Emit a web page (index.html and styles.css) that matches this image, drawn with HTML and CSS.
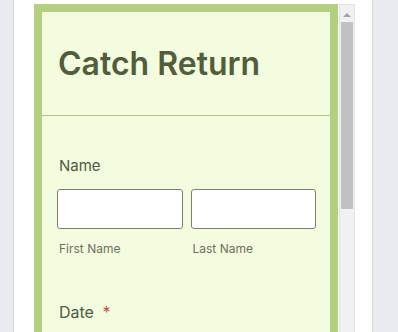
FILE: index.html
```html
<!DOCTYPE html>
<html lang="en">
<head>
  <meta charset="UTF-8">
  <title>Catch Return</title>
  <link rel="stylesheet" href="styles.css">
</head>
<body>
  <div class="panel">
    <div class="frame">
      <div class="form-box">
        <div class="form-header">
          <h1>Catch Return</h1>
        </div>

        <div class="field">
          <label class="field-label">Name</label>
          <div class="name-row">
            <div class="name-part">
              <input type="text" class="text-input">
              <span class="sub-label">First Name</span>
            </div>
            <div class="name-part">
              <input type="text" class="text-input">
              <span class="sub-label">Last Name</span>
            </div>
          </div>
        </div>

        <div class="field field-date">
          <label class="field-label date-label">Date <span class="required">*</span></label>
        </div>
      </div>

      <div class="scrollbar">
        <div class="scroll-up"></div>
        <div class="scroll-thumb"></div>
      </div>
    </div>
  </div>
</body>
</html>
```

FILE: styles.css
```css
html, body {
  margin: 0;
  height: 100%;
  overflow: hidden;
}

body {
  background: #ebecf2;
  font-family: Inter, "Noto Sans", sans-serif;
}

.panel {
  margin-left: 13px;
  width: 360px;
  height: 100%;
  background: #fff;
  border-left: 1px solid #d6d6db;
  border-right: 1px solid #d6d6db;
  padding: 4px 0 0 20px;
  box-sizing: border-box;
}

.frame {
  display: flex;
  height: 100%;
}

.form-box {
  width: 304px;
  height: 600px;
  box-sizing: border-box;
  border: 8px solid #b3cf7f;
  background: #f3fcdf;
}

.form-header {
  padding: 32px 16px 32px;
  border-bottom: 1px solid #b3c28c;
}

h1 {
  margin: 0;
  font-size: 32px;
  font-weight: 600;
  line-height: normal;
  color: #525d3b;
}

.field {
  padding: 40px 14px 0 15px;
}

.field-label {
  display: block;
  font-size: 15px;
  color: #4f5a3f;
  padding-left: 2px;
}

.name-row {
  display: flex;
  gap: 8px;
  margin-top: 14px;
}

.name-part {
  flex: 1;
  display: flex;
  flex-direction: column;
}

.text-input {
  height: 40px;
  box-sizing: border-box;
  border: 1px solid #7e7f6c;
  border-radius: 3px;
  background: #fff;
  margin: 0;
  width: 100%;
}

.sub-label {
  margin-top: 12px;
  padding-left: 2px;
  font-size: 12px;
  color: #6d7060;
}

.field-date {
  padding-top: 46px;
}

.date-label {
  font-size: 16px;
  padding-left: 2px;
}

.required {
  color: #c4514d;
  margin-left: 4px;
}

.scrollbar {
  width: 16px;
  margin-left: 1px;
  box-sizing: border-box;
  border: 1px solid #e3e3e3;
  border-bottom: none;
  background: #f1f1f1;
  display: flex;
  flex-direction: column;
  align-items: center;
}

.scroll-up {
  width: 0;
  height: 0;
  margin-top: 8px;
  border-left: 4px solid transparent;
  border-right: 4px solid transparent;
  border-bottom: 4px solid #a3a3a3;
}

.scroll-thumb {
  width: 12px;
  height: 187px;
  margin-top: 5px;
  background: #c1c1c1;
}
```
